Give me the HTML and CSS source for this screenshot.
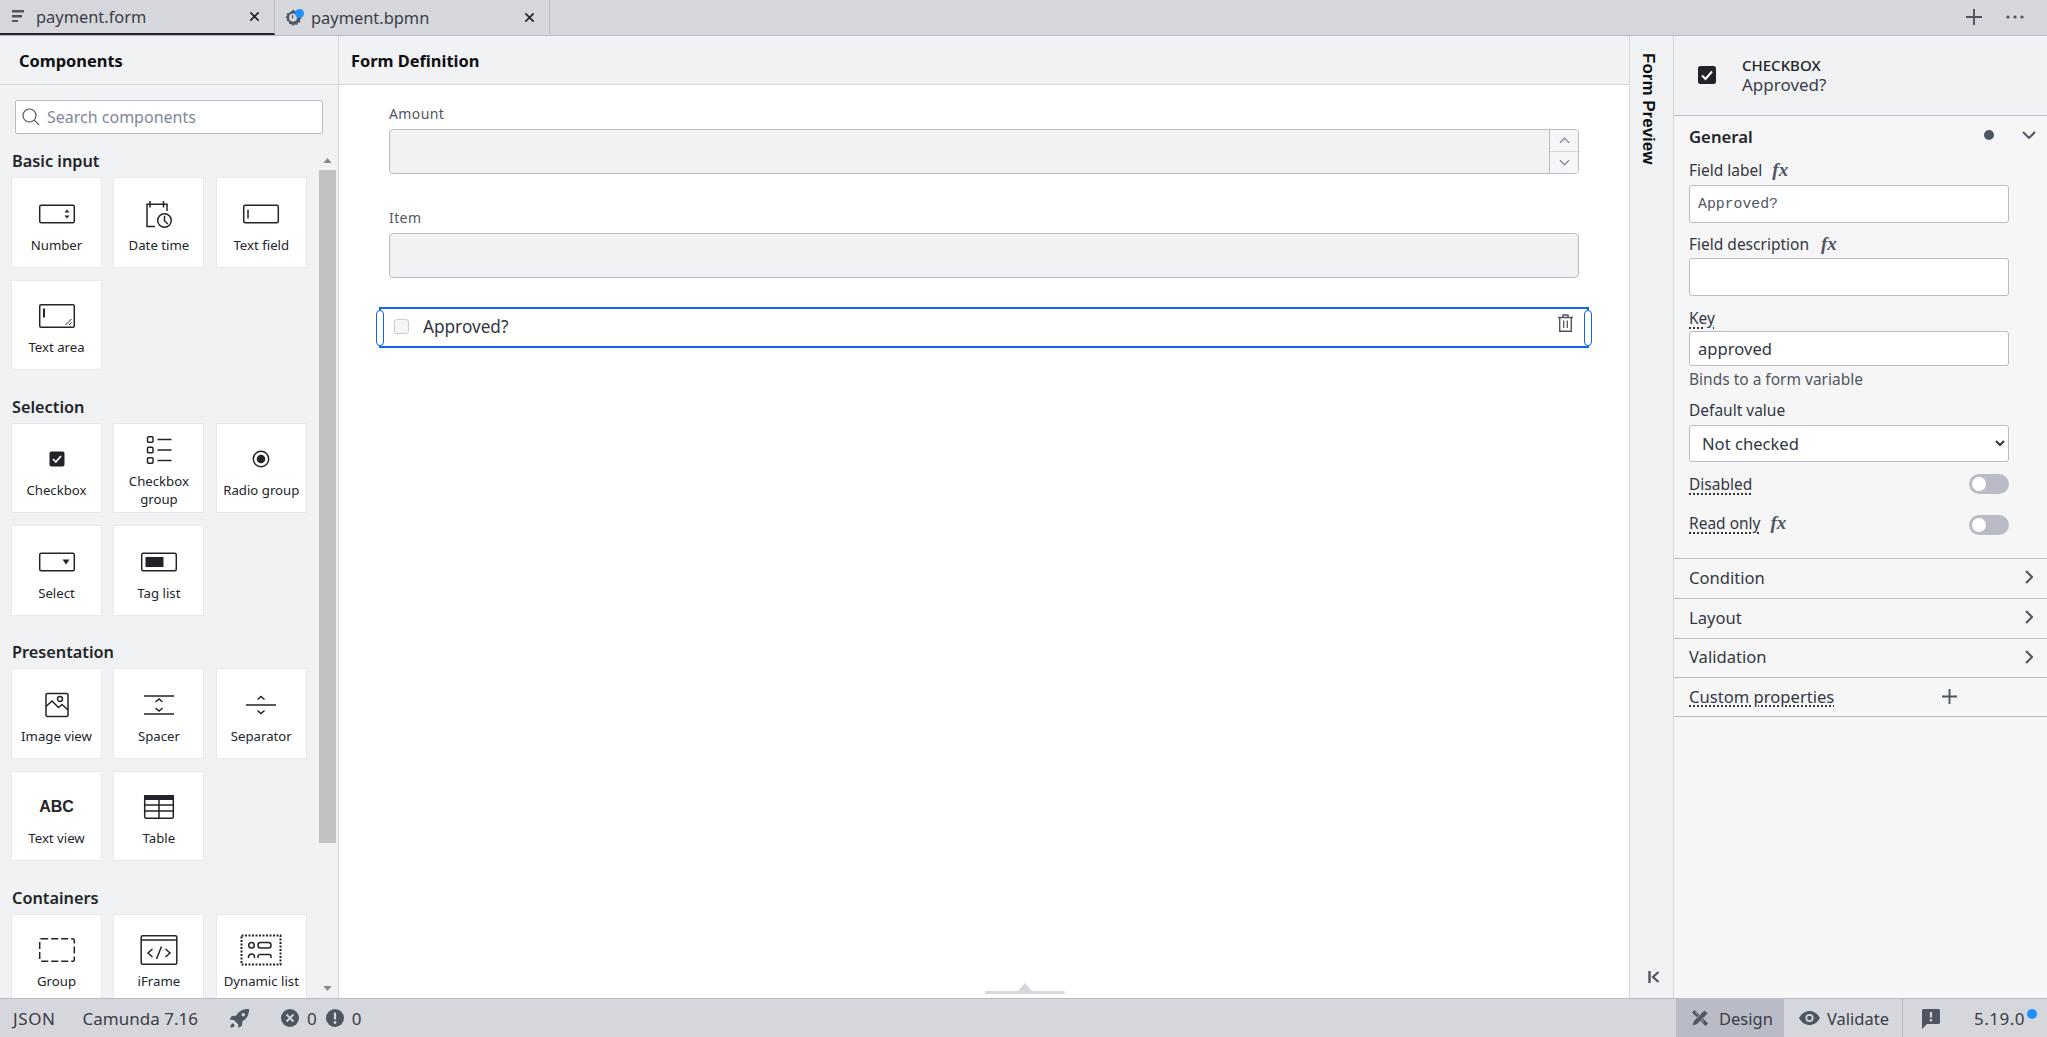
FILE: index.html
```html
<!DOCTYPE html>
<html lang="en">
<head>
<meta charset="utf-8">
<title>payment.form</title>
<link rel="stylesheet" href="styles.css">
</head>
<body>
<header class="tabs">
  <div class="tab tab-active">
    <svg class="tab-icon" viewBox="0 0 12 12"><path d="M0 0h12v2.400H0zM0 5h10v2.400H0zM0 10h6v2.400H0z" fill="#505562"/></svg>
    <span class="tab-name">payment.form</span>
    <svg class="tab-close" viewBox="0 0 12 12"><path d="M1.500 1.500l9 9M10.500 1.500l-9 9" stroke="#22242a" stroke-width="1.800" fill="none"/></svg>
  </div>
  <div class="tab">
    <svg class="tab-icon-gear" viewBox="0 0 20 20"><path d="M8 3.200l2-1.700 1.500 2 2.500-.4 .4 2.500 2.400 1v2.400l1.700 1.500-1.700 2 .4 2.500-2.500.4-1 2.400-2.400-.4-1.900 1.600-1.500-2-2.500-.2-.3-2.500-2.300-1 .6-2.400L1.500 10l1.800-1.800-.5-2.500 2.500-.4z" fill="#505562"/><circle cx="9.500" cy="10" r="4.200" fill="#d5d7dd"/><path d="M9 7.500v3.500" stroke="#505562" stroke-width="1.400"/></svg>
    <span class="tab-dot"></span>
    <span class="tab-name">payment.bpmn</span>
    <svg class="tab-close" viewBox="0 0 12 12"><path d="M1.500 1.500l9 9M10.500 1.500l-9 9" stroke="#22242a" stroke-width="1.800" fill="none"/></svg>
  </div>
  <div class="tab-fill">
    <svg class="tab-plus" viewBox="0 0 16 16"><path d="M8 0v16M0 8h16" stroke="#505562" stroke-width="2"/></svg>
    <svg class="tab-more" viewBox="0 0 18 4"><circle cx="2" cy="2" r="1.600" fill="#505562"/><circle cx="9" cy="2" r="1.600" fill="#505562"/><circle cx="16" cy="2" r="1.600" fill="#505562"/></svg>
  </div>
</header>

<main class="main">
  <section class="palette">
    <h2 class="panel-head">Components</h2>
    <div class="search-wrap">
      <label class="search">
        <svg class="search-icon" viewBox="0 0 18 18"><circle cx="7.500" cy="7.500" r="6.500" stroke="#505562" stroke-width="1.200" fill="none"/><path d="M12.200 12.200l5 5" stroke="#505562" stroke-width="1.200"/></svg>
        <input class="search-input" type="text" placeholder="Search components">
      </label>
    </div>
    <div class="palette-body">
      <div class="palette-list">
        <h3 class="group-title">Basic input</h3>
        <div class="cards">
          <div class="card"><svg class="ico" viewBox="-22 -18 44 36"><rect x="-17.300" y="-8.800" width="34.600" height="17.600" rx="1.500" class="ln"/><path d="M7.500-1.500l2.500-3 2.500 3zM7.500 1.500l2.500 3 2.500-3z" class="fl"/></svg><span class="card-label">Number</span></div>
          <div class="card"><svg class="ico" viewBox="-22 -18 44 36"><path d="M-4 12.500H-12V-9.700H8V-3M-9-13V-6.500M4.500-13V-6.500" class="ln"/><circle cx="5.500" cy="6.500" r="6.800" class="ln"/><path d="M5.500 1.800V6.800L8.800 10" class="ln"/></svg><span class="card-label">Date time</span></div>
          <div class="card"><svg class="ico" viewBox="-22 -18 44 36"><rect x="-17.300" y="-8.800" width="34.600" height="17.600" rx="1.500" class="ln"/><path d="M-13-4.500V4.500" class="ln"/></svg><span class="card-label">Text field</span></div>
          <div class="card"><svg class="ico" viewBox="-22 -18 44 36"><rect x="-17.300" y="-11.300" width="34.600" height="22.600" rx="1.500" class="ln"/><path d="M-13-7.500V1.500" class="ln ln-bold"/><path d="M8.500 9L14.500 3M12 9L14.500 6.500" class="ln ln-thin"/></svg><span class="card-label">Text area</span></div>
        </div>

        <h3 class="group-title group-next">Selection</h3>
        <div class="cards">
          <div class="card"><svg class="ico" viewBox="-22 -18 44 36"><rect x="-7.500" y="-7.500" width="15" height="15" rx="2" class="fl"/><path d="M-4 0L-1.200 3L4-3" stroke="#fff" stroke-width="1.800" fill="none"/></svg><span class="card-label">Checkbox</span></div>
          <div class="card"><svg class="ico" viewBox="-22 -18 44 36"><rect x="-11.500" y="-13.300" width="5.500" height="5.500" rx="1" class="ln"/><rect x="-11.500" y="-2.800" width="5.500" height="5.500" rx="1" class="ln"/><rect x="-11.500" y="7.700" width="5.500" height="5.500" rx="1" class="ln"/><path d="M-1.500-10.500H12.500M-1.500 0H12.500M-1.500 10.500H12.500" class="ln"/></svg><span class="card-label">Checkbox group</span></div>
          <div class="card"><svg class="ico" viewBox="-22 -18 44 36"><circle r="7.700" class="ln"/><circle r="4.300" class="fl"/></svg><span class="card-label">Radio group</span></div>
          <div class="card"><svg class="ico" viewBox="-22 -18 44 36"><rect x="-17.300" y="-8.800" width="34.600" height="17.600" rx="1.500" class="ln"/><path d="M5.500-2.500H12.500L9 2.500z" class="fl"/></svg><span class="card-label">Select</span></div>
          <div class="card"><svg class="ico" viewBox="-22 -18 44 36"><rect x="-17.300" y="-8.800" width="34.600" height="17.600" rx="1.500" class="ln"/><rect x="-13.500" y="-5" width="18" height="10" class="fl"/></svg><span class="card-label">Tag list</span></div>
        </div>

        <h3 class="group-title group-next">Presentation</h3>
        <div class="cards">
          <div class="card"><svg class="ico" viewBox="-22 -18 44 36"><rect x="-11" y="-11.500" width="22" height="23" rx="1.500" class="ln"/><path d="M-11 1.500L-5-4L1.500 2.500L5-0.500L11 5" class="ln"/><circle cx="3" cy="-6" r="2.500" class="ln"/></svg><span class="card-label">Image view</span></div>
          <div class="card"><svg class="ico" viewBox="-22 -18 44 36"><path d="M-15-9H15M-15 9H15M-3.500-3L0-6L3.500-3M-3.500 3L0 6L3.500 3" class="ln"/></svg><span class="card-label">Spacer</span></div>
          <div class="card"><svg class="ico" viewBox="-22 -18 44 36"><path d="M-15 0H15M-3.500-5.500L0-8.500L3.500-5.500M-3.500 5.500L0 8.500L3.500 5.500" class="ln"/></svg><span class="card-label">Separator</span></div>
          <div class="card"><span class="ico ico-abc">ABC</span><span class="card-label">Text view</span></div>
          <div class="card"><svg class="ico" viewBox="-22 -18 44 36"><rect x="-14.300" y="-11.300" width="28.600" height="22.600" rx="1.500" class="ln"/><path d="M-15-12H15V-7H-15z" class="fl"/><path d="M-14-2H14M-14 4H14M0-7V11" class="ln"/></svg><span class="card-label">Table</span></div>
        </div>

        <h3 class="group-title group-next">Containers</h3>
        <div class="cards">
          <div class="card"><svg class="ico" viewBox="-22 -18 44 36"><rect x="-17.300" y="-11.300" width="34.600" height="22.600" rx="1.500" class="ln ln-dash"/></svg><span class="card-label">Group</span></div>
          <div class="card"><svg class="ico" viewBox="-22 -18 44 36"><rect x="-17.800" y="-14.300" width="35.600" height="28.600" rx="1.500" class="ln"/><path d="M-18-9H18M-6.500 0L-11 4L-6.500 8M6.500 0L11 4L6.500 8M2.500-2.500L-2.500 10" class="ln" transform="translate(0 -1)"/></svg><span class="card-label">iFrame</span></div>
          <div class="card"><svg class="ico" viewBox="-22 -18 44 36"><rect x="-19.500" y="-14.500" width="39" height="29" class="ln ln-dot"/><circle cx="-9.500" cy="-4.800" r="2.800" class="ln"/><rect x="-3" y="-7.500" width="13" height="5.500" rx="2.500" class="ln"/><path d="M-12.500 8V7A3 3 0 0 1-6.500 7V8M-3 8V6.500A2 2 0 0 1-1 4.500H8A2 2 0 0 1 10 6.500V8" class="ln"/></svg><span class="card-label">Dynamic list</span></div>
        </div>
      </div>
      <div class="scrollbar">
        <div class="scroll-btn"><svg class="scroll-arrow" viewBox="0 0 10 6"><path d="M0 6L5 0L10 6z"/></svg></div>
        <div class="scroll-thumb"></div>
        <div class="scroll-space"></div>
        <div class="scroll-btn"><svg class="scroll-arrow" viewBox="0 0 10 6"><path d="M0 0L5 6L10 0z"/></svg></div>
      </div>
    </div>
  </section>

  <section class="canvas">
    <h2 class="panel-head panel-head-form">Form Definition</h2>
    <div class="form">
      <div class="form-field">
        <div class="form-label">Amount</div>
        <div class="num-input">
          <div class="num-value"></div>
          <div class="num-steps">
            <div class="num-step"><svg class="num-chev" viewBox="0 0 12 7"><path d="M1 6L6 1L11 6" /></svg></div>
            <div class="num-step num-step-low"><svg class="num-chev" viewBox="0 0 12 7"><path d="M1 1L6 6L11 1" /></svg></div>
          </div>
        </div>
      </div>
      <div class="form-field form-field-next">
        <div class="form-label">Item</div>
        <div class="text-input"></div>
      </div>
      <div class="selected">
        <span class="handle handle-left"></span>
        <span class="cb"></span>
        <span class="cb-label">Approved?</span>
        <svg class="trash" viewBox="0 0 15 18"><path d="M0 3.500H15M5 3V1H10V3" stroke="#505562" stroke-width="1.400" fill="none"/><path d="M1.700 3.500V17.200H13.300V3.500" stroke="#505562" stroke-width="1.400" fill="none"/><path d="M5.700 6.500V14M9.300 6.500V14" stroke="#505562" stroke-width="1.300"/></svg>
        <span class="handle handle-right"></span>
      </div>
    </div>
    <div class="drag-handle"><span class="drag-tip"></span></div>
  </section>

  <aside class="rail">
    <div class="rail-title">Form Preview</div>
    <svg class="rail-icon" viewBox="0 0 12 12"><path d="M1.500 0V12" stroke="#505562" stroke-width="2.400"/><path d="M10.500 1L5 6L10.500 11" stroke="#505562" stroke-width="2.200" fill="none"/></svg>
  </aside>

  <aside class="props">
    <div class="props-head">
      <svg class="props-icon" viewBox="0 0 18 18"><rect width="18" height="18" rx="2.500" fill="#22242a"/><path d="M4 9.500L7.500 13L14 5.500" stroke="#fff" stroke-width="2" fill="none"/></svg>
      <div class="props-titles">
        <div class="props-type">CHECKBOX</div>
        <div class="props-name">Approved?</div>
      </div>
    </div>
    <div class="general">
      <div class="general-head">
        <span class="section-title">General</span>
        <span class="general-dot"></span>
        <svg class="chev-down" viewBox="0 0 14 8"><path d="M1 1L7 7L13 1" stroke="#505562" stroke-width="2" fill="none"/></svg>
      </div>
      <div class="prop-label lbl-first">Field label <span class="fx">fx</span></div>
      <input class="prop-input prop-input-mono" type="text" value="Approved?">
      <div class="prop-label lbl-desc">Field description <span class="fx fx-wide">fx</span></div>
      <input class="prop-input" type="text">
      <div class="prop-label lbl-key"><span class="dotted">Key</span></div>
      <input class="prop-input prop-input-key" type="text" value="approved">
      <div class="prop-hint">Binds to a form variable</div>
      <div class="prop-label lbl-default">Default value</div>
      <select class="prop-select"><option>Not checked</option></select>
      <div class="toggle-row toggle-first">
        <span class="dotted">Disabled</span>
        <span class="toggle"><span class="knob"></span></span>
      </div>
      <div class="toggle-row toggle-second">
        <span class="toggle-text"><span class="dotted">Read only</span> <span class="fx">fx</span></span>
        <span class="toggle"><span class="knob"></span></span>
      </div>
    </div>
    <div class="row"><span class="row-text">Condition</span><svg class="chev-right" viewBox="0 0 8 14"><path d="M1 1L7 7L1 13" stroke="#505562" stroke-width="2" fill="none"/></svg></div>
    <div class="row"><span class="row-text">Layout</span><svg class="chev-right" viewBox="0 0 8 14"><path d="M1 1L7 7L1 13" stroke="#505562" stroke-width="2" fill="none"/></svg></div>
    <div class="row"><span class="row-text">Validation</span><svg class="chev-right" viewBox="0 0 8 14"><path d="M1 1L7 7L1 13" stroke="#505562" stroke-width="2" fill="none"/></svg></div>
    <div class="row row-last"><span class="row-grow"><span class="row-text dotted">Custom properties</span></span><svg class="row-plus" viewBox="0 0 16 16"><path d="M8 0v16M0 8h16" stroke="#505562" stroke-width="2"/></svg></div>
  </aside>
</main>

<footer class="status">
  <span class="st-json">JSON</span>
  <span class="st-engine">Camunda 7.16</span>
  <svg class="st-rocket" viewBox="0 0 22 22"><path d="M21 1C15 1 10.500 3 7.500 8L3 8.500L.5 12L5 12.500L9.500 17L10 21L13.500 18.500L14 14C19 11 21 7 21 1z" fill="#505562"/><circle cx="15" cy="7" r="1.800" fill="#d5d7dd"/><path d="M1.500 20.500C1.500 18 2.500 16.500 4 16L6 18C5.500 19.500 4 20.500 1.500 20.500z" fill="#505562"/></svg>
  <svg class="st-err" viewBox="0 0 18 18"><circle cx="9" cy="9" r="9" fill="#505562"/><path d="M5.500 5.500l7 7M12.500 5.500l-7 7" stroke="#d5d7dd" stroke-width="1.800"/></svg>
  <span class="st-count">0</span>
  <svg class="st-warn" viewBox="0 0 18 18"><circle cx="9" cy="9" r="9" fill="#505562"/><path d="M9 3.500V10.500" stroke="#d5d7dd" stroke-width="2.200"/><circle cx="9" cy="13.500" r="1.400" fill="#d5d7dd"/></svg>
  <span class="st-count">0</span>
  <span class="st-spacer"></span>
  <div class="st-tab st-tab-active">
    <svg class="st-tab-icon" viewBox="0 0 18 18"><path d="M3.500 1L1 3.500L14.500 17L17 14.500z" fill="#505562"/><path d="M4.500 3.500L6 5M8 7.500L9.500 9M11.500 11.500L13 13" stroke="#b9bcc6" stroke-width="1"/><path d="M13.500 1L17 4.500L6 15.500L.8 17.200L2.500 12z" fill="#505562" stroke="#b9bcc6" stroke-width="1"/></svg>
    <span class="st-tab-text">Design</span>
  </div>
  <div class="st-tab st-tab-second">
    <svg class="st-tab-icon st-eye" viewBox="0 0 21 14"><path d="M0 7C3 2 6.500 0 10.500 0S18 2 21 7C18 12 14.500 14 10.500 14S3 12 0 7z" fill="#505562"/><circle cx="10.500" cy="7" r="4" fill="#d5d7dd"/><circle cx="10.500" cy="7" r="2.300" fill="#505562"/></svg>
    <span class="st-tab-text">Validate</span>
  </div>
  <svg class="st-feedback" viewBox="0 0 18 20"><path d="M1.500 0H16.500A1.500 1.500 0 0 1 18 1.500V13.500A1.500 1.500 0 0 1 16.500 15H5L0 20V1.500A1.500 1.500 0 0 1 1.500 0z" fill="#505562"/><path d="M9 3V8.500" stroke="#d5d7dd" stroke-width="2.200"/><circle cx="9" cy="11.300" r="1.300" fill="#d5d7dd"/></svg>
  <span class="st-version">5.19.0<span class="st-version-dot"></span></span>
</footer>
</body>
</html>
```

FILE: styles.css
```css
* { box-sizing: border-box; }
html, body { height: 100%; }
body {
  margin: 0;
  display: flex;
  flex-direction: column;
  height: 100vh;
  overflow: hidden;
  background: #fff;
  color: #22242a;
  font-family: "Noto Sans", "Liberation Sans", sans-serif;
  font-size: 16px;
}

/* tabs */
.tabs {
  flex: 0 0 35px;
  display: flex;
  background: #d5d7dd;
  border-bottom: 1px solid #b9bcc6;
}
.tab {
  position: relative;
  width: 275px;
  height: 34px;
  display: flex;
  align-items: center;
  border-right: 1px solid #b9bcc6;
  color: #3a3d47;
}
.tab-active {
  height: 35px;
  border-bottom: 2px solid #22242a;
  padding-bottom: 1px;
}
.tab-icon { width: 12px; height: 12px; margin-left: 12px; margin-right: 12px; }
.tab-icon-gear { width: 19px; height: 19px; margin-left: 9px; margin-right: 8px; }
.tab-dot {
  position: absolute;
  left: 20px;
  top: 9px;
  width: 9px;
  height: 9px;
  border-radius: 50%;
  background: #1e90ff;
}
.tab-name { flex: 1; font-size: 16.400px; }
.tab-close { width: 11px; height: 11px; margin-right: 14px; }
.tab-fill {
  flex: 1;
  display: flex;
  align-items: center;
  justify-content: flex-end;
  padding-bottom: 1px;
}
.tab-plus { width: 16px; height: 16px; margin-right: 24px; }
.tab-more { width: 18px; height: 4px; margin-right: 23px; }

/* main */
.main { flex: 1; display: flex; min-height: 0; }

.panel-head {
  margin: 0;
  height: 49px;
  padding-left: 19px;
  display: flex;
  align-items: center;
  background: #f1f2f4;
  border-bottom: 1px solid #d5d7dd;
  font-size: 16.400px;
  font-weight: 700;
  color: #0e0f12;
}
.panel-head-form { padding-left: 12px; }

/* palette */
.palette {
  flex: 0 0 339px;
  display: flex;
  flex-direction: column;
  background: #f1f2f4;
  border-right: 1px solid #d5d7dd;
}
.search-wrap { padding: 15px 15px 16px; }
.search {
  width: 308px;
  height: 34px;
  display: flex;
  align-items: center;
  background: #fff;
  border: 1px solid #b9bcc6;
  border-radius: 2px;
}
.search-icon { width: 18px; height: 18px; margin-left: 6px; margin-right: 7px; }
.search-input {
  flex: 1;
  min-width: 0;
  border: 0;
  outline: 0;
  padding: 0;
  background: transparent;
  font: inherit;
  font-size: 16px;
}
.search-input::placeholder { color: #818798; opacity: 1; }

.palette-body { flex: 1; display: flex; min-height: 0; }
.palette-list { width: 319px; padding-left: 11px; overflow: hidden; }
.group-title {
  margin: 0 0 5px;
  height: 22px;
  line-height: 22px;
  padding-left: 1px;
  font-size: 16.300px;
  font-weight: 600;
  color: #22242a;
}
.group-next { margin-top: 25.500px; }
.cards {
  display: grid;
  grid-template-columns: repeat(3, 91px);
  grid-auto-rows: 90.500px;
  column-gap: 11.400px;
  row-gap: 12px;
}
.card {
  display: flex;
  flex-direction: column;
  align-items: center;
  justify-content: center;
  gap: 4px;
  padding-top: 5px;
  background: #fff;
  border: 1px solid #e8e9ec;
}
.ico { flex: 0 0 36px; width: 44px; height: 36px; overflow: visible; }
.ico-abc {
  display: flex;
  align-items: center;
  justify-content: center;
  font-family: "Liberation Sans", sans-serif;
  font-size: 16px;
  font-weight: 700;
}
.ln { fill: none; stroke: #22242a; stroke-width: 1.500; }
.ln-bold { stroke-width: 2; }
.ln-thin { stroke-width: 1; }
.fl { fill: #22242a; }
.ln-dash { stroke-dasharray: 7 3; }
.ln-dot { stroke-dasharray: 2 1.500; stroke-width: 2; }
.card-label {
  width: 80px;
  text-align: center;
  font-size: 13.200px;
  line-height: 18px;
  color: #22242a;
}

.scrollbar {
  flex: 0 0 17px;
  margin-right: 2px;
  display: flex;
  flex-direction: column;
  background: #f1f1f1;
}
.scroll-btn {
  flex: 0 0 20px;
  display: flex;
  align-items: center;
  justify-content: center;
}
.scroll-arrow { width: 9px; height: 5px; fill: #8a8a8a; }
.scroll-thumb { flex: 0 0 673px; background: #c1c1c1; }
.scroll-space { flex: 1; }

/* canvas */
.canvas {
  position: relative;
  flex: 1;
  min-width: 0;
  display: flex;
  flex-direction: column;
  background: #fff;
}
.form { padding: 19px 50px 0 50px; }
.form-label {
  height: 20px;
  line-height: 20px;
  font-size: 14px;
  letter-spacing: .4px;
  color: #505562;
}
.form-field-next { margin-top: 34px; }
.num-input, .text-input {
  height: 45px;
  margin-top: 5px;
  background: #f1f2f4;
  border: 1px solid #b9bcc6;
  border-radius: 4px;
}
.num-input { display: flex; overflow: hidden; }
.num-value { flex: 1; }
.num-steps {
  width: 29px;
  display: flex;
  flex-direction: column;
  border-left: 1px solid #b9bcc6;
  background: #f6f6f8;
}
.num-step { flex: 1; display: flex; align-items: center; justify-content: center; }
.num-step-low { border-top: 1px solid #d5d7dd; }
.num-chev { width: 11px; height: 7px; fill: none; stroke: #818798; stroke-width: 1.300; }
.selected {
  position: relative;
  height: 41px;
  margin: 29px -10px 0;
  display: flex;
  align-items: center;
  padding: 0 14px 2px 13px;
  border: 2px solid #0f62fe;
}
.cb {
  width: 15px;
  height: 15px;
  margin-right: 14px;
  background: #f5f5f5;
  border: 1px solid #ccc;
  border-radius: 3px;
}
.cb-label { flex: 1; font-size: 17.200px; color: #33363f; }
.trash { width: 15px; height: 18px; margin-top: -7px; }
.handle {
  position: absolute;
  top: 1px;
  width: 8px;
  height: 36px;
  background: #fff;
  border: 1px solid #0f62fe;
  border-radius: 4px;
}
.handle-left { left: -5px; }
.handle-right { right: -5px; }
.drag-handle {
  position: absolute;
  left: 646px;
  bottom: 4px;
  width: 80px;
  height: 3px;
  border-radius: 2px;
  background: #d5d7dd;
}
.drag-tip {
  position: absolute;
  left: 33px;
  top: -8px;
  width: 0;
  height: 0;
  border-left: 7px solid transparent;
  border-right: 7px solid transparent;
  border-bottom: 8px solid #d5d7dd;
}

/* rail */
.rail {
  flex: 0 0 45px;
  display: flex;
  flex-direction: column;
  background: #f1f2f4;
  border-left: 1px solid #d5d7dd;
  border-right: 1px solid #d5d7dd;
}
.rail-title {
  align-self: flex-start;
  writing-mode: vertical-rl;
  margin: 17px 0 0 8px;
  font-family: "Liberation Sans", sans-serif;
  font-size: 17px;
  line-height: 20px;
  font-weight: 700;
  color: #0e0f12;
}
.rail-icon { width: 12px; height: 12px; margin: auto 0 15px 18px; }

/* properties */
.props {
  flex: 0 0 373px;
  min-width: 0;
  background: #f6f6f7;
}
.props-head {
  height: 80px;
  display: flex;
  align-items: center;
  background: #f1f2f4;
  border-bottom: 1px solid #b9bcc6;
  padding-bottom: 1px;
}
.props-icon { width: 18px; height: 18px; margin-left: 24px; margin-right: 26px; }
.props-type { font-size: 15px; line-height: 19px; font-weight: 500; color: #22242a; }
.props-name { font-size: 17px; line-height: 20px; color: #3a3d47; }
.general { padding: 0 38px 23px 15px; }
.general-head { height: 40px; display: flex; align-items: center; }
.section-title { flex: 1; font-size: 16.700px; font-weight: 600; color: #22242a; }
.general-dot {
  width: 10px;
  height: 10px;
  border-radius: 50%;
  background: #505562;
  margin-right: 28px;
  margin-top: -3px;
}
.chev-down { flex: none; width: 14px; height: 8px; margin-right: -27px; margin-top: -2px; }
.prop-label {
  height: 20px;
  line-height: 20px;
  font-size: 15.500px;
  color: #33363f;
  white-space: nowrap;
}
.lbl-first { margin-top: 4px; margin-bottom: 5px; }
.lbl-desc { margin-top: 11px; margin-bottom: 4px; }
.lbl-key { margin-top: 12px; margin-bottom: 3px; }
.lbl-default { margin-top: 11px; margin-bottom: 5px; }
.fx {
  margin-left: 6px;
  font-family: "Liberation Serif", serif;
  font-style: italic;
  font-weight: 700;
  font-size: 19px;
  line-height: 1;
  color: #505562;
}
.fx-wide { margin-left: 8px; }
.prop-input {
  display: block;
  width: 320px;
  height: 38px;
  padding: 0 8px;
  background: #fff;
  border: 1px solid #b9bcc6;
  border-radius: 3px;
  outline: 0;
  font: inherit;
  color: #33363f;
}
.prop-input-mono { font-family: "Liberation Mono", monospace; font-size: 14.800px; color: #505562; }
.prop-input-key { height: 35px; font-size: 16.600px; }
.prop-hint {
  height: 20px;
  margin-top: 3px;
  line-height: 20px;
  font-size: 15.500px;
  color: #505562;
}
.prop-select {
  display: block;
  width: 320px;
  height: 37px;
  padding: 0 8px;
  background: #fff;
  border: 1px solid #b9bcc6;
  border-radius: 3px;
  outline: 0;
  font: inherit;
  font-size: 16.600px;
  color: #33363f;
}
.toggle-row {
  height: 20px;
  display: flex;
  align-items: center;
  justify-content: space-between;
  font-size: 15.500px;
  line-height: 20px;
  color: #33363f;
}
.toggle-text { margin-bottom: 4px; }
.toggle-first { margin-top: 12px; }
.toggle-second { margin-top: 21px; }
.dotted {
  text-decoration: underline dotted #33363f 1.500px;
  text-underline-offset: 3px;
}
.toggle {
  width: 40px;
  height: 20px;
  padding: 3px;
  border-radius: 10px;
  background: #b9bcc6;
}
.knob {
  display: block;
  width: 14px;
  height: 14px;
  border-radius: 50%;
  background: #fff;
}
.row {
  position: relative;
  height: 39.750px;
  display: flex;
  align-items: center;
  padding-left: 15px;
  padding-bottom: 2px;
  border-top: 1px solid #b9bcc6;
}
.row-last { border-bottom: 1px solid #b9bcc6; }
.row-text { flex: 1; font-size: 16.600px; color: #33363f; }
.row-grow { flex: 1; }
.chev-right { width: 8px; height: 14px; margin-right: 14px; }
.row-plus { width: 15px; height: 15px; margin-right: 90px; }

/* status */
.status {
  flex: 0 0 39px;
  display: flex;
  align-items: center;
  background: #d5d7dd;
  border-top: 1px solid #b9bcc6;
  color: #3a3d47;
  font-size: 17px;
}
.st-json { margin-left: 13px; letter-spacing: .6px; }
.st-engine { margin-left: 27px; }
.st-rocket { width: 21px; height: 21px; margin-left: 31px; }
.st-err { width: 18px; height: 18px; margin-left: 31px; }
.st-warn { width: 18px; height: 18px; margin-left: 9px; }
.st-count { margin-left: 8px; }
.st-spacer { flex: 1; }
.st-tab {
  height: 100%;
  display: flex;
  align-items: center;
}
.st-tab-text { font-size: 16.500px; }
.st-tab-active { gap: 10px; width: 108px; padding-left: 15px; background: #b9bcc6; }
.st-tab-second {
  gap: 7px;
  width: 119px;
  padding-left: 15px;
  border-right: 1px solid #b9bcc6;
}
.st-tab-icon { width: 18px; height: 18px; }
.st-eye { width: 21px; height: 14px; }
.st-feedback { width: 18px; height: 20px; margin-left: 19px; margin-top: 2px; }
.st-version { position: relative; margin-left: 34px; margin-right: 22px; letter-spacing: .5px; }
.st-version-dot {
  position: absolute;
  left: 100%;
  top: 2px;
  margin-left: 2px;
  width: 10px;
  height: 10px;
  border-radius: 50%;
  background: #1e90ff;
}
```
